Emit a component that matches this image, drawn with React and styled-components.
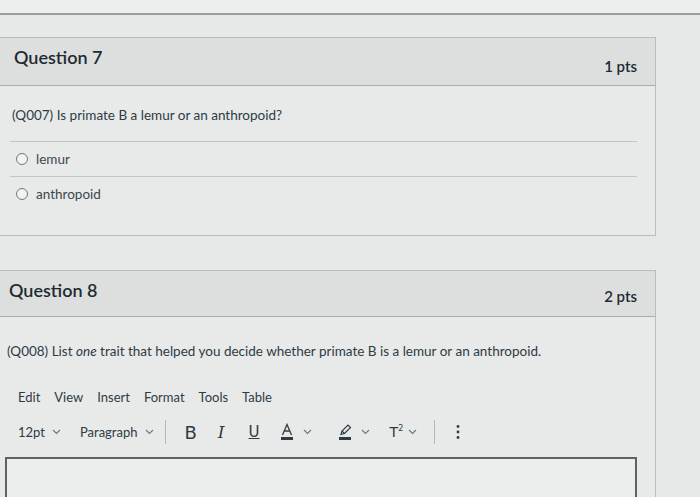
import React from 'react';
import styled, { createGlobalStyle } from 'styled-components';

const GlobalStyle = createGlobalStyle`
  html, body {
    margin: 0;
    padding: 0;
    background: #e6e8e7;
    font-family: Lato, "Open Sans", sans-serif;
    color: #2d3b45;
  }
`;

const Page = styled.div`
  width: 700px;
  height: 497px;
  overflow: hidden;
  background: #e7e9e8;
`;

const TopRule = styled.div`
  height: 13px;
  background: #edeeee;
  border-bottom: 2px solid #9a9e9f;
  margin-bottom: 22px;
`;

const Card = styled.section`
  width: 656px;
  box-sizing: border-box;
  background: #e8eae9;
  border: 1px solid #b9bdbe;
  border-left: none;
  margin-bottom: ${(p) => p.gap || 0}px;
`;

const Header = styled.header`
  height: ${(p) => p.h}px;
  box-sizing: border-box;
  background: #dcdfde;
  border-bottom: 1px solid #a9adae;
  display: flex;
  align-items: center;
  justify-content: space-between;
  padding: 0 18px 0 ${(p) => p.left}px;
`;

const Title = styled.h2`
  margin: ${(p) => p.lift}px 0 0;
  font-size: 18px;
  font-weight: 600;
  color: #1f2a30;
`;

const Pts = styled.span`
  font-size: 15px;
  font-weight: 600;
  color: #1f2a30;
  margin-top: ${(p) => p.drop || 0}px;
`;

const Body = styled.div`
  padding: ${(p) => p.pad};
`;

const Prompt = styled.p`
  margin: 0;
  font-size: 13.5px;
  color: #2d3b45;
  em { font-style: italic; }
`;

const Answers = styled.ul`
  list-style: none;
  margin: 18px 18px 0 -2px;
  padding: 0;
`;

const Answer = styled.li`
  display: flex;
  align-items: center;
  gap: 8px;
  height: 34px;
  padding-left: 6px;
  border-top: 1px solid #c2c6c7;
  font-size: 13.5px;
  color: #3b474f;
`;

const Radio = styled.span`
  width: 10px;
  height: 10px;
  border: 1px solid #6f7a80;
  border-radius: 50%;
  background: #f2f3f3;
`;

const MenuBar = styled.nav`
  display: flex;
  gap: 14px;
  margin: 30px 0 0 18px;
  font-size: 13px;
  color: #2d3b45;
`;

const Toolbar = styled.div`
  display: flex;
  align-items: center;
  height: 30px;
  margin: 12px 0 0 18px;
  font-size: 13px;
  color: #2d3b45;
`;

const Dropdown = styled.span`
  display: flex;
  align-items: center;
  gap: 7px;
  margin-right: ${(p) => p.mr}px;
`;

const Divider = styled.span`
  width: 1px;
  height: 24px;
  background: #b4b8ba;
  margin: 0 ${(p) => p.l}px 0 ${(p) => p.r}px;
`;

const Tool = styled.span`
  display: flex;
  align-items: center;
  gap: 8px;
  margin-right: ${(p) => p.mr}px;
  font-size: 17px;
  font-family: "DejaVu Sans", sans-serif;
  color: #2d3b45;
`;

const Editor = styled.div`
  margin: 10px 18px 0 5px;
  height: 60px;
  border: 2px solid #5b6368;
  border-bottom: none;
  background: #eceeed;
`;

const Chevron = () => (
  <svg width="9" height="6" viewBox="0 0 9 6" fill="none" stroke="#6b767c" strokeWidth="1.1">
    <path d="M1 1l3.5 3.5L8 1" />
  </svg>
);

const ColorA = () => (
  <svg width="16" height="18" viewBox="0 0 16 18">
    <path d="M3.5 12L8 1.5l4.5 10.5M5.2 8h5.6" fill="none" stroke="#2d3b45" strokeWidth="1.3" />
    <rect x="2" y="14" width="12" height="3" fill="#2d3b45" />
  </svg>
);

const Highlight = () => (
  <svg width="16" height="18" viewBox="0 0 16 18">
    <path d="M4 11.5l1-3.5 6-6 2.5 2.5-6 6z" fill="none" stroke="#2d3b45" strokeWidth="1.2" />
    <path d="M5 8l2.5 2.5" stroke="#2d3b45" strokeWidth="1.1" />
    <rect x="2" y="14" width="12" height="3" fill="#2d3b45" />
  </svg>
);

const Kebab = () => (
  <svg width="4" height="16" viewBox="0 0 4 16" fill="#2d3b45">
    <circle cx="2" cy="2.5" r="1.4" />
    <circle cx="2" cy="8" r="1.4" />
    <circle cx="2" cy="13.5" r="1.4" />
  </svg>
);

export default function App() {
  return (
    <Page>
      <GlobalStyle />
      <TopRule />
      <Card gap={34}>
        <Header h={48} left={14}>
          <Title lift={-10}>Question 7</Title>
          <Pts drop={8}>1 pts</Pts>
        </Header>
        <Body pad="21px 0 24px 12px">
          <Prompt>(Q007) Is primate B a lemur or an anthropoid?</Prompt>
          <Answers>
            <Answer><Radio />lemur</Answer>
            <Answer><Radio />anthropoid</Answer>
          </Answers>
        </Body>
      </Card>
      <Card>
        <Header h={46} left={9}>
          <Title lift={-8}>Question 8</Title>
          <Pts drop={4}>2 pts</Pts>
        </Header>
        <Body pad="26px 0 0 7px">
          <Prompt>(Q008) List <em>one</em> trait that helped you decide whether primate B is a lemur or an anthropoid.</Prompt>
        </Body>
        <MenuBar>
          <span>Edit</span>
          <span>View</span>
          <span>Insert</span>
          <span>Format</span>
          <span>Tools</span>
          <span>Table</span>
        </MenuBar>
        <Toolbar>
          <Dropdown mr={19}>12pt <Chevron /></Dropdown>
          <Dropdown mr={0}>Paragraph <Chevron /></Dropdown>
          <Divider r={11} l={19} />
          <Tool mr={21} style={{ fontSize: 18 }}>B</Tool>
          <Tool mr={24} style={{ fontStyle: 'italic', fontFamily: '"DejaVu Serif", serif', fontWeight: 300 }}>I</Tool>
          <Tool mr={19} style={{ textDecoration: 'underline', fontSize: 15 }}>U</Tool>
          <Tool mr={25}><ColorA /><Chevron /></Tool>
          <Tool mr={20}><Highlight /><Chevron /></Tool>
          <Tool mr={0} style={{ fontSize: 14, gap: 5 }}>
            <span>T<sup style={{ fontSize: 8 }}>2</sup></span><Chevron />
          </Tool>
          <Divider r={17} l={21} />
          <Kebab />
        </Toolbar>
        <Editor />
      </Card>
    </Page>
  );
}
